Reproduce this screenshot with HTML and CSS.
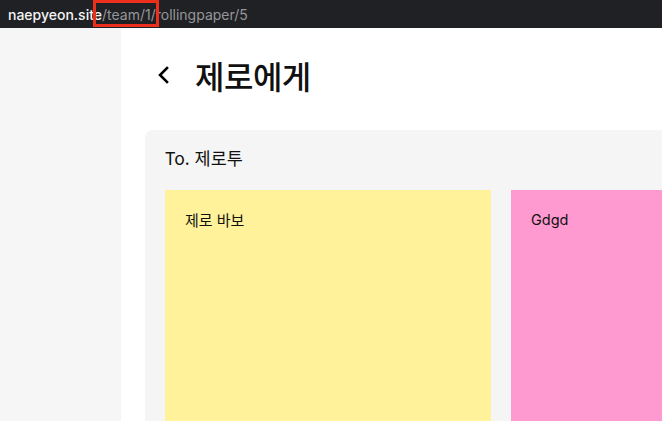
FILE: index.html
```html
<!DOCTYPE html>
<html lang="ko">
<head>
<meta charset="utf-8">
<link rel="stylesheet" href="styles.css">
</head>
<body>
<div class="urlbar">
  <span class="host">naepyeon.site</span><span class="path">/team/1/rollingpaper/5</span>
  <span class="highlight"></span>
</div>
<div class="layout">
  <aside class="sidebar"></aside>
  <main class="main">
    <header class="title-row">
      <svg class="back" width="14" height="18" viewBox="0 0 14 18"><path d="M10 2 L3 9 L10 16" fill="none" stroke="#000" stroke-width="2.6" stroke-linecap="square"/></svg>
      <h1 class="title">제로에게</h1>
    </header>
    <section class="paper">
      <div class="to">To. 제로투</div>
      <div class="notes">
        <div class="note yellow">제로 바보</div>
        <div class="note pink">Gdgd</div>
      </div>
    </section>
  </main>
</div>
</body>
</html>
```
FILE: styles.css
```css
* { box-sizing: border-box; }
html, body { margin: 0; padding: 0; }
body {
  width: 662px;
  height: 421px;
  overflow: hidden;
  font-family: "Noto Sans CJK KR", "Noto Sans", sans-serif;
  background: #fff;
}
.urlbar {
  position: relative;
  height: 28px;
  background: #202124;
  padding-left: 8px;
  display: flex;
  align-items: center;
  font-family: Inter, "Liberation Sans", sans-serif;
  font-size: 14px;
}
.host { color: #f4f4f4; font-weight: 500; }
.path { color: #96969a; }
.highlight {
  position: absolute;
  left: 93px;
  top: 0;
  width: 66px;
  height: 27px;
  border: 3.5px solid #ec2f1c;
}
.layout {
  display: flex;
  height: 393px;
}
.sidebar {
  width: 121px;
  background: #f6f6f6;
  flex-shrink: 0;
}
.main {
  flex: 1;
  padding: 27px 0 0 24px;
  overflow: hidden;
}
.title-row {
  display: flex;
  align-items: center;
  height: 40px;
  padding-left: 12px;
}
.back { margin-right: 24px; }
.title {
  margin: 0;
  font-size: 32px;
  font-weight: 500;
  line-height: 40px;
  color: #111;
  letter-spacing: -0.5px;
}
.paper {
  margin-top: 35px;
  background: #f5f5f5;
  border-radius: 8px 0 0 0;
  padding: 17px 0 0 20px;
  height: 400px;
  width: 600px;
}
.to {
  font-size: 17.5px;
  line-height: 22px;
  color: #111;
}
.notes {
  margin-top: 21px;
  display: flex;
  gap: 20px;
}
.note {
  width: 326px;
  height: 260px;
  flex-shrink: 0;
  padding: 18px 20px;
  font-size: 15px;
  line-height: 24px;
  color: #111;
}
.yellow { background: #fff29a; }
.pink { background: #ff9ad0; font-family: Inter, "Liberation Sans", sans-serif; font-size: 14.5px; }
```
